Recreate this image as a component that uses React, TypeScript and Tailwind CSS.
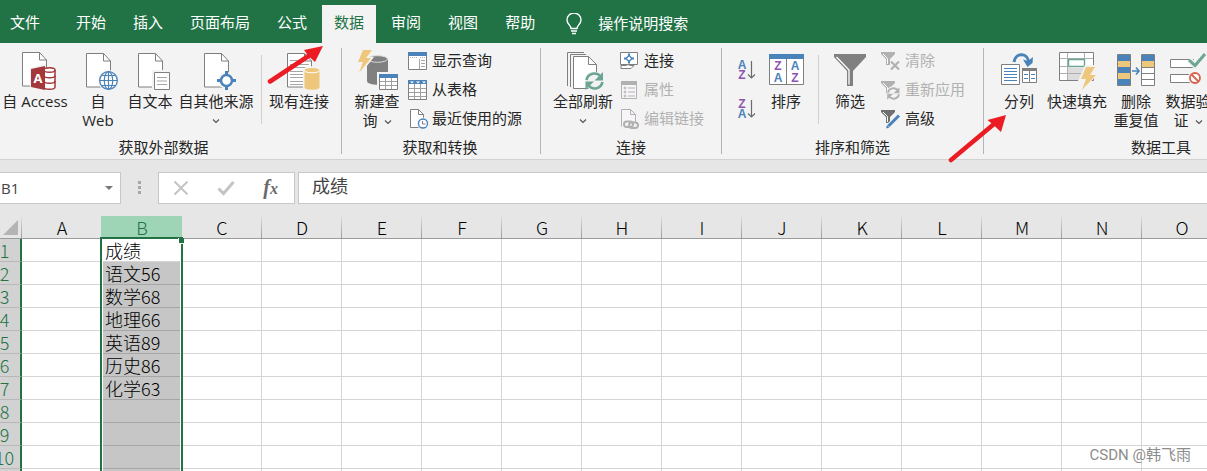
import type { ReactNode } from 'react';

const GREY = '#7f7f7f';
const BLUE = '#4a82ba';
const YELLOW = '#eec77c';
const TEAL = '#6ba593';
const PURPLE = '#8d55b0';
const MUTED = '#b1b1b1';
const PAPER = '#f3f3f3';

/* ---------- Icons ---------- */

const Big = ({ children }: { children: ReactNode }) => (
  <svg className="h-[42px] w-10 shrink-0 overflow-visible" viewBox="0 0 40 42" fill="none" aria-hidden="true">
    {children}
  </svg>
);

const Small = ({ children }: { children: ReactNode }) => (
  <svg className="h-5 w-5 shrink-0 overflow-visible" viewBox="0 0 20 20" fill="none" aria-hidden="true">
    {children}
  </svg>
);

const Page = () => (
  <>
    <path d="M8.5 3.5h17l7 7.5v26h-24z" fill="#fff" stroke={GREY} />
    <path d="M25.5 3.5V11h7" stroke={GREY} />
  </>
);

const AccessIcon = () => (
  <Big>
    <path d="M7.5 2.5h17l7 7.5v26h-24z" fill="#fff" stroke={GREY} />
    <path d="M24.5 2.5V10h7" stroke={GREY} />
    <path d="M15 18l16-4v28l-16-4z" fill={PAPER} />
    <path d="M29 20c0-3 11-3 11 0v17c0 3-11 3-11 0z" fill="#fff" stroke="#a4373a" strokeWidth="1.5" />
    <path d="M29 20c0 3 11 3 11 0M29 25.5c0 3 11 3 11 0M29 31c0 3 11 3 11 0" stroke="#a4373a" strokeWidth="1.5" />
    <path d="M16 19l14-3v24l-14-3z" fill="#a4373a" />
    <text x="23" y="32.500" textAnchor="middle" fontSize="13" fontWeight="700" fontFamily="Open Sans" fill="#fff">A</text>
  </Big>
);

const WebIcon = () => (
  <Big>
    <Page />
    <circle cx="30.500" cy="30.500" r="10.500" fill={PAPER} />
    <circle cx="30.500" cy="30.500" r="8.800" fill="#fff" stroke={BLUE} strokeWidth="1.300" />
    <ellipse cx="30.500" cy="30.500" rx="4.200" ry="8.800" stroke={BLUE} strokeWidth="1.200" />
    <path d="M30.500 22v17.500M21.500 30.500h18M23 25.500h15M23 35.500h15" stroke={BLUE} strokeWidth="1.200" />
  </Big>
);

const TextIcon = () => (
  <Big>
    <Page />
    <path d="M22 20h19v21H22z" fill={PAPER} />
    <path d="M24.500 22.500h15v17h-15z" fill="#fff" stroke={GREY} />
    <path d="M27 27.500h10M27 31h10M27 34.500h10" stroke="#a6a6a6" />
  </Big>
);

const SourcesIcon = () => (
  <Big>
    <Page />
    <circle cx="30.500" cy="30.500" r="8.500" fill={PAPER} />
    <path d="M30.500 21v5M30.500 35v5M21 30.500h5M35 30.500h5" stroke={BLUE} strokeWidth="3" />
    <circle cx="30.500" cy="30.500" r="5.500" fill="#fff" stroke={BLUE} strokeWidth="2.500" />
  </Big>
);

const ExistingIcon = () => (
  <Big>
    <Page />
    <path d="M11 10.500h12M11 14.500h19M11 17.500h19M11 21.500h19M11 24.500h13M11 27.500h13M11 31.500h13M11 34.500h13" stroke="#a6a6a6" />
    <path d="M24 20c0-5 18-5 18 0v18c0 4-18 4-18 0z" fill={PAPER} />
    <path d="M25.500 20.500c0-3.500 15-3.500 15 0v17c0 3-15 3-15 0z" fill={YELLOW} />
    <path d="M25.500 20.500c0 3 15 3 15 0" stroke="#fff" />
  </Big>
);

const NewQueryIcon = () => (
  <Big>
    <path d="M10 9v22c0 5 21 5 21 0V9z" fill="#808080" />
    <ellipse cx="20.500" cy="9" rx="10" ry="3.300" fill="#808080" stroke="#d9d9d9" />
    <path d="M5-1h11l-5 8h6L2 26l2-12h-5z" fill={PAPER} />
    <path d="M6 0h9l-6 8h5L2 23l4-11H1z" fill={YELLOW} />
    <path d="M20 22h22v20H20z" fill={PAPER} />
    <path d="M22.500 24.500h18v15h-18z" fill="#fff" stroke={GREY} />
    <path d="M22 24h19v4H22z" fill={BLUE} />
    <path d="M23 31.500h17M23 35.500h17M28.500 28v11M34.500 28v11" stroke="#a0a0a0" />
  </Big>
);

const RefreshArrows = ({ color }: { color: string }) => (
  <>
    <path d="M2 9a8 8 0 0 1 14-3.500" stroke={color} strokeWidth="2.600" />
    <path d="M18.500 1v8.500H10z" fill={color} />
    <path d="M18 11a8 8 0 0 1-14 3.500" stroke={color} strokeWidth="2.600" />
    <path d="M1 19v-8.500h8.500z" fill={color} />
  </>
);

const RefreshAllIcon = () => (
  <Big>
    <path d="M4.500 36V2.500H21M7.500 37V4.500H23" stroke={GREY} />
    <path d="M10.500 6.500h15l8 8v24h-23z" fill="#fff" stroke={GREY} />
    <path d="M25.500 6.500v8h8" stroke={GREY} />
    <circle cx="31" cy="31" r="9.500" fill={PAPER} />
    <g transform="translate(21.500 21)">
      <RefreshArrows color={TEAL} />
    </g>
  </Big>
);

const ShowQueriesIcon = () => (
  <Small>
    <path d="M.5 1.500h18v17H.5z" fill="#fff" stroke={GREY} />
    <path d="M0 1h19v4H0z" fill={BLUE} />
    <path d="M11.500 8v10" stroke="#a6a6a6" />
    <path d="M2 6.500h8M12 6.500h6" stroke="#b5b5b5" strokeDasharray="1 1" />
    <path d="M13 9.500h4M13 12.500h4M13 15.500h4" stroke="#a6a6a6" />
  </Small>
);

const FromTableIcon = () => (
  <Small>
    <path d="M.5.5h18v19H.5z" fill="#fff" stroke={GREY} />
    <path d="M0 0h19v4H0z" fill={BLUE} />
    <path d="M2 1.500h4l-2 2zM8 1.500h4l-2 2zM14 1.500h4l-2 2z" fill="#fff" />
    <path d="M1 8.500h17M1 12.500h17M1 16.500h17M6.500 4v15M12.500 4v15" stroke="#a0a0a0" />
  </Small>
);

const RecentIcon = () => (
  <Small>
    <path d="M2.500.5h8l5 5v13h-13z" fill="#fff" stroke={GREY} />
    <path d="M10.500.5v5h5" stroke={GREY} />
    <circle cx="15" cy="14.500" r="6" fill={PAPER} />
    <circle cx="15" cy="14.500" r="4.500" fill="#fff" stroke={BLUE} strokeWidth="1.300" />
    <path d="M14.500 12v3h3" stroke={GREY} />
  </Small>
);

const ConnectionsIcon = () => (
  <Small>
    <path d="M.5 1.500h17v12H.5z" fill="#fff" stroke={GREY} />
    <path d="M1 14.500h5l2-1 2 1h4l-3 3H1z" fill="#fff" stroke={GREY} />
    <path d="M9 2.500v3M9 9.500v3M4 7.500h3M11 7.500h3" stroke={BLUE} strokeWidth="2" />
    <path d="M9 4.500l3 3-3 3-3-3z" fill="#fff" stroke={BLUE} strokeWidth="1.300" />
  </Small>
);

const PropertiesIcon = () => (
  <Small>
    <path d="M1.500 1.500h15v17h-15z" fill="#f8f5f9" stroke={MUTED} />
    <path d="M1 1h16v4H1z" fill={MUTED} />
    <path d="M8 8h7M8 12h7M8 16h7" stroke={MUTED} />
    <circle cx="5" cy="8" r="1" stroke={MUTED} />
    <circle cx="5" cy="12" r="1" stroke={MUTED} />
    <circle cx="5" cy="16" r="1" stroke={MUTED} />
  </Small>
);

const EditLinksIcon = () => (
  <Small>
    <path d="M1.500 17.500V.5h9l5 5v8" fill="#f8f5f9" stroke={MUTED} />
    <path d="M10.500.5v5h5" stroke={MUTED} />
    <rect x="4" y="12.500" width="9" height="5.500" rx="2.700" stroke={MUTED} strokeWidth="2" />
    <rect x="9" y="13.500" width="9" height="5.500" rx="2.700" stroke={MUTED} strokeWidth="2" />
  </Small>
);

const SortGlyph = ({ top, bottom, topColor, bottomColor }: { top: string; bottom: string; topColor: string; bottomColor: string }) => (
  <svg className="h-6 w-5 overflow-visible" viewBox="0 0 20 24" fill="none" aria-hidden="true">
    <g fontSize="12" fontWeight="700" fontFamily="Liberation Sans" textAnchor="middle">
      <text x="6" y="11" fill={topColor}>{top}</text>
      <text x="6" y="21" fill={bottomColor}>{bottom}</text>
    </g>
    <path d="M15.500 3v17M12 16.500l3.500 3.500 3.500-3.500" stroke="#6b6b6b" strokeWidth="1.200" />
  </svg>
);

const SortIcon = () => (
  <Big>
    <path d="M3.500 4.500h34v30h-34z" fill="#fff" stroke={GREY} />
    <path d="M3 4h35v5H3z" fill={BLUE} />
    <path d="M20.500 9v25" stroke={GREY} />
    <g fontSize="12" fontWeight="700" fontFamily="Liberation Sans" textAnchor="middle">
      <text x="12" y="20" fill={PURPLE}>Z</text>
      <text x="12" y="31.500" fill={BLUE}>A</text>
      <text x="29" y="20" fill={BLUE}>A</text>
      <text x="29" y="31.500" fill={PURPLE}>Z</text>
    </g>
  </Big>
);

const FilterIcon = () => (
  <Big>
    <path d="M4 4h32v3L23 21v15h-6V21L4 7z" fill="#808080" />
    <path d="M6.500 7L19 20v14.500" stroke="#fff" strokeWidth="1.300" />
  </Big>
);

const SmallFunnel = ({ color }: { color: string }) => (
  <>
    <path d="M0 1h14v2L9 8v6H5V8L0 3z" fill={color} />
    <path d="M2 3l4.500 4.500V13" stroke="#fff" />
  </>
);

const ClearIcon = () => (
  <Small>
    <SmallFunnel color={MUTED} />
    <path d="M10 10.500l8 8M18 10.500l-8 8" stroke={MUTED} strokeWidth="2.200" />
  </Small>
);

const ReapplyIcon = () => (
  <Small>
    <SmallFunnel color={MUTED} />
    <circle cx="12.500" cy="13" r="7" fill={PAPER} />
    <g transform="translate(5.500 6.500) scale(.7)">
      <RefreshArrows color={MUTED} />
    </g>
  </Small>
);

const AdvancedIcon = () => (
  <Small>
    <SmallFunnel color="#6f6f6f" />
    <path d="M6 18.500L18 6.500" stroke={PAPER} strokeWidth="5" />
    <path d="M7.500 17L18 6.500" stroke={BLUE} strokeWidth="3" />
    <path d="M5 19.500l1-3.500 2.500 2.500z" fill={BLUE} />
  </Small>
);

const SplitColumnsIcon = () => (
  <Big>
    <path d="M2.500 14.500h18v20h-18z" fill="#fff" stroke={GREY} />
    <path d="M5 18.500h13M5 21.500h13M5 24.500h13M5 27.500h13M5 30.500h13" stroke={BLUE} />
    <path d="M23.500 18.500h14v14h-14z" fill="#fff" stroke={GREY} />
    <path d="M23 18h15v3H23zM30 21h1v12h-1z" fill={GREY} />
    <path d="M25 24.500h4M32 24.500h4M25 28.500h4M32 28.500h4" stroke={BLUE} />
    <path d="M15 12c1-9 13-10 14.500-1" stroke={BLUE} strokeWidth="3" />
    <path d="M24 9.500l5 1.500 5-4-.5 6-5 4z" fill={BLUE} />
  </Big>
);

const FlashFillIcon = () => (
  <Big>
    <path d="M2.500 2.500h34v28h-34z" fill="#fff" stroke={GREY} />
    <path d="M11 18h17v12H11z" fill="#dcdcdc" />
    <path d="M3 8.500h33M3 16.500h33M3 23.500h33M10.500 3v27M27.500 3v27" stroke="#b0b0b0" />
    <path d="M11.500 9.500h16v7h-16z" fill="#fff" stroke={TEAL} strokeWidth="1.400" />
    <path d="M28 15h13l-4 8h5L24 42l1-9h-5z" fill={PAPER} />
    <path d="M29 17h9l-5 8h6L25 40l4-11h-5z" fill={YELLOW} />
  </Big>
);

const RemoveDuplicatesIcon = () => (
  <Big>
    <path d="M1.500 4.500h13v31h-13z" fill={BLUE} stroke={GREY} />
    <path d="M2 11h12v6H2zM2 23h12v6H2z" fill={YELLOW} />
    <path d="M25.500 4.500h13v31h-13z" fill="#fff" stroke={GREY} />
    <path d="M26 5h12v6H26z" fill={BLUE} />
    <path d="M26 11h12v6H26z" fill={YELLOW} />
    <path d="M26 17.500h12M26 23.500h12M26 29.500h12" stroke={GREY} />
    <path d="M16 21h6M20 17.500l3 3.500-3 3.500" stroke={BLUE} strokeWidth="1.600" />
  </Big>
);

const ValidationIcon = () => (
  <Big>
    <path d="M2.500 9.500h23v8h-23zM2.500 24.500h23v8h-23z" fill="#fff" stroke={GREY} />
    <path d="M21 10l6 5.500L37 4" stroke={PAPER} strokeWidth="6" />
    <path d="M21 10l6 5.500L37 4" stroke={TEAL} strokeWidth="3" />
    <circle cx="27" cy="28" r="7" fill={PAPER} />
    <circle cx="27" cy="28" r="5" fill="#fff" stroke="#d8604c" strokeWidth="1.800" />
    <path d="M23.500 24.500l7 7" stroke="#d8604c" strokeWidth="1.800" />
  </Big>
);

const BulbIcon = () => (
  <svg className="h-[22px] w-4" viewBox="0 0 16 22" fill="none" stroke="#fff" strokeWidth="1.400" aria-hidden="true">
    <path d="M5 15.500c0-3-4-4.500-4-8.500a7 7 0 0 1 14 0c0 4-4 5.500-4 8.500zM5 18h6M6 20.500h4" />
  </svg>
);

const Chevron = () => (
  <svg className="inline-block h-2 w-2" viewBox="0 0 8 8" fill="none" stroke="#555" strokeWidth="1.200" aria-hidden="true">
    <path d="M1 2.500l3 3 3-3" />
  </svg>
);

/* ---------- Ribbon parts ---------- */

interface BigButtonProps {
  icon: ReactNode;
  lines: string[];
  menu?: boolean;
  width: string;
}

const BigButton = ({ icon, lines, menu, width }: BigButtonProps) => (
  <button type="button" className={`flex shrink-0 flex-col items-center pt-1 leading-[19px] whitespace-nowrap ${width}`}>
    {icon}
    {lines.map((line, i) => (
      <span key={line}>
        {line}
        {menu && lines.length > 1 && i === lines.length - 1 && <span className="ml-1.5"><Chevron /></span>}
      </span>
    ))}
    {menu && lines.length === 1 && <span className="flex h-[19px] items-center"><Chevron /></span>}
  </button>
);

const SmallButton = ({ icon, label, disabled }: { icon: ReactNode; label: string; disabled?: boolean }) => (
  <button
    type="button"
    disabled={disabled}
    className="flex h-[29px] items-center gap-1 whitespace-nowrap disabled:text-[#b1b1b1]"
  >
    {icon}
    {label}
  </button>
);

const Group = ({ title, className, titleClass = '', children }: { title: string; className: string; titleClass?: string; children: ReactNode }) => (
  <section className="flex shrink-0 flex-col pt-[3px]">
    <div className={`flex h-[91px] items-start ${className}`}>{children}</div>
    <h2 className={`text-center leading-5 ${titleClass}`}>{title}</h2>
  </section>
);

const GroupLine = () => <div className="mt-[5px] h-[106px] w-px shrink-0 bg-[#b5b5b5]" />;
const InnerLine = ({ className }: { className: string }) => (
  <div className={`mt-[9px] h-[69px] w-px shrink-0 bg-[#d0d0d0] ${className}`} />
);

const tabs = ['开始', '插入', '页面布局', '公式', '数据', '审阅', '视图', '帮助'];

const TabBar = () => (
  <nav className="flex h-[43px] shrink-0 items-end gap-[3px] overflow-hidden bg-[#217346] whitespace-nowrap text-white">
    <button type="button" className="mr-[9px] h-[38px] pr-3 pb-1 pl-2.5">文件</button>
    {tabs.map((tab) => (
      <button
        key={tab}
        type="button"
        className={`h-[38px] px-3 pb-1 ${tab === '数据' ? 'bg-[#f3f3f3] text-[#217346]' : ''}`}
      >
        {tab}
      </button>
    ))}
    <button type="button" className="ml-3 flex h-[38px] items-center gap-4 px-1 pb-px">
      <BulbIcon />
      操作说明搜索
    </button>
  </nav>
);

const Ribbon = () => (
  <div className="flex h-[117px] shrink-0 overflow-hidden border-b border-[#d2d2d2] bg-[#f3f3f3]">
    <Group title="获取外部数据" className="pr-[5px]" titleClass="pr-3.5">
      <BigButton icon={<AccessIcon />} lines={['自 Access']} width="w-[70px]" />
      <BigButton icon={<WebIcon />} lines={['自', 'Web']} width="w-14" />
      <BigButton icon={<TextIcon />} lines={['自文本']} width="w-12" />
      <BigButton icon={<SourcesIcon />} lines={['自其他来源']} menu width="w-[84px]" />
      <InnerLine className="ml-[3px]" />
      <BigButton icon={<ExistingIcon />} lines={['现有连接']} width="w-[74px]" />
    </Group>
    <GroupLine />
    <Group title="获取和转换" className="pr-[18px] pl-2" titleClass="pr-0.5">
      <BigButton icon={<NewQueryIcon />} lines={['新建查', '询']} menu width="w-[54px]" />
      <div className="ml-1">
        <SmallButton icon={<ShowQueriesIcon />} label="显示查询" />
        <SmallButton icon={<FromTableIcon />} label="从表格" />
        <SmallButton icon={<RecentIcon />} label="最近使用的源" />
      </div>
    </Group>
    <GroupLine />
    <Group title="连接" className="pr-[17px] pl-[7px]">
      <BigButton icon={<RefreshAllIcon />} lines={['全部刷新']} menu width="w-[70px]" />
      <div className="ml-[2px]">
        <SmallButton icon={<ConnectionsIcon />} label="连接" />
        <SmallButton icon={<PropertiesIcon />} label="属性" disabled />
        <SmallButton icon={<EditLinksIcon />} label="编辑链接" disabled />
      </div>
    </Group>
    <GroupLine />
    <Group title="排序和筛选" className="pr-[18px] pl-[14px]">
      <div className="flex w-6 shrink-0 flex-col pt-1">
        <button type="button" aria-label="升序" className="flex h-[39px] items-center">
          <SortGlyph top="A" bottom="Z" topColor={BLUE} bottomColor={PURPLE} />
        </button>
        <button type="button" aria-label="降序" className="flex h-[39px] items-center">
          <SortGlyph top="Z" bottom="A" topColor={PURPLE} bottomColor={BLUE} />
        </button>
      </div>
      <BigButton icon={<SortIcon />} lines={['排序']} width="w-[52px]" />
      <InnerLine className="ml-1.5" />
      <BigButton icon={<FilterIcon />} lines={['筛选']} width="w-[62px]" />
      <div>
        <SmallButton icon={<ClearIcon />} label="清除" disabled />
        <SmallButton icon={<ReapplyIcon />} label="重新应用" disabled />
        <SmallButton icon={<AdvancedIcon />} label="高级" />
      </div>
    </Group>
    <GroupLine />
    <Group title="数据工具" className="w-[356px] pl-[7px]" titleClass="pr-0.5">
      <BigButton icon={<SplitColumnsIcon />} lines={['分列']} width="w-14" />
      <BigButton icon={<FlashFillIcon />} lines={['快速填充']} width="w-[60px]" />
      <BigButton icon={<RemoveDuplicatesIcon />} lines={['删除', '重复值']} width="w-[58px]" />
      <BigButton icon={<ValidationIcon />} lines={['数据验', '证']} menu width="w-[46px]" />
    </Group>
  </div>
);

const FormulaBar = () => (
  <div className="flex h-14 shrink-0 items-start bg-[#e6e6e6] pt-3">
    <div className="flex h-8 w-[121px] shrink-0 items-center border border-l-0 border-[#c6c6c6] bg-white pr-[7px]">
      <input aria-label="名称框" defaultValue="B1" className="min-w-0 flex-1 pl-px text-[#444] outline-none" />
      <svg className="h-2 w-2" viewBox="0 0 8 8" fill="#777" aria-hidden="true"><path d="M0 2h8L4 6z" /></svg>
    </div>
    <svg className="mx-[17px] h-8 w-[3px]" viewBox="0 0 3 32" fill="#a6a6a6" aria-hidden="true">
      <path d="M0 9h3v3H0zM0 14h3v3H0zM0 19h3v3H0z" />
    </svg>
    <div className="flex h-8 w-[137px] shrink-0 items-center justify-between border border-[#c6c6c6] bg-white pr-4 pl-3.5">
      <button type="button" aria-label="取消">
        <svg className="h-4 w-4" viewBox="0 0 16 16" stroke="#c4c4c4" strokeWidth="2" aria-hidden="true"><path d="M1.500 1.500l13 13M14.500 1.500l-13 13" /></svg>
      </button>
      <button type="button" aria-label="输入">
        <svg className="h-4 w-[18px]" viewBox="0 0 18 16" fill="none" stroke="#c4c4c4" strokeWidth="3" aria-hidden="true"><path d="M1.500 8.500l5 5L16.500 2" /></svg>
      </button>
      <button type="button" aria-label="插入函数" className="font-['Liberation_Serif',serif] text-xl leading-6 font-bold text-[#6a6a6a] italic">
        f<span className="text-base">x</span>
      </button>
    </div>
    <input
      aria-label="编辑栏"
      defaultValue="成绩"
      className="ml-[3px] h-8 min-w-0 flex-1 border border-r-0 border-[#c6c6c6] bg-white pb-1.5 pl-[13px] text-lg text-[#444] outline-none"
    />
  </div>
);

/* ---------- Sheet ---------- */

const columns = ['A', 'B', 'C', 'D', 'E', 'F', 'G', 'H', 'I', 'J', 'K', 'L', 'M', 'N', 'O'];
const values = ['成绩', '语文56', '数学68', '地理66', '英语89', '历史86', '化学63', '', '', '', ''];

const headerFill = (column: string) => {
  if (column === 'B') return 'bg-[#9fd5b7] text-[#217346]';
  // the line before the selected column takes its colour
  if (column === 'A') return 'bg-[linear-gradient(#9fd5b7,#9fd5b7)] bg-[length:1px_100%] bg-right bg-no-repeat';
  return 'bg-[linear-gradient(#e0e0e0,#9b9b9b)] bg-[length:1px_100%] bg-right bg-no-repeat';
};

const Sheet = () => (
  <div className="relative flex-1 overflow-hidden bg-white font-['Noto_Sans_CJK_SC',sans-serif] text-lg font-light text-black">
    <table className="-ml-[11px] w-[1233px] table-fixed border-separate border-spacing-0 leading-[22px]">
      <colgroup>
        <col className="w-[33px]" />
        {columns.map((c) => <col key={c} className="w-20" />)}
      </colgroup>
      <thead>
        <tr className="h-[23px] bg-[#e6e6e6]">
          <th aria-label="全选" className="border-b border-[#9b9b9b] bg-[linear-gradient(#e0e0e0,#9b9b9b)] bg-[length:1px_100%] bg-right bg-no-repeat p-0">
            <svg className="ml-[14px] h-[15px] w-[15px]" viewBox="0 0 15 15" fill="#b4b4b4" aria-hidden="true"><path d="M15 0v15H0z" /></svg>
          </th>
          {columns.map((c) => (
            <th key={c} scope="col" className={`border-b border-[#9b9b9b] p-0 font-light ${headerFill(c)}`}>
              <div className="h-[22px]">{c}</div>
            </th>
          ))}
        </tr>
      </thead>
      <tbody>
        {values.map((value, row) => (
          <tr key={row} className="h-[23px]">
            <th scope="row" className="border-r-2 border-b border-r-[#217346] border-b-[#b8b8b8] bg-[#d2d2d2] p-0 font-light text-[#217346]">
              <div className="h-[22px]">{row < 10 ? row + 1 : ''}</div>
            </th>
            {columns.map((c) => (
              <td
                key={c}
                className={`border-r border-b p-0 ${
                  c === 'B' && row > 0 ? 'border-[#a6a6a6] bg-[#c6c6c6]' : 'border-[#d4d4d4]'
                }`}
              >
                {c === 'B' && <div className="h-[22px] pl-[3px] whitespace-nowrap">{value}</div>}
              </td>
            ))}
          </tr>
        ))}
      </tbody>
    </table>
    {/* Selection frame with its fill handle */}
    <div className="pointer-events-none absolute top-[21px] left-[100px] h-full w-[83px] border-2 border-b-0 border-[#217346]">
      <div className="h-full border-x border-t-0 border-white" />
      <div className="absolute -top-px -right-[3px] h-[6px] w-[6px] border-b border-l border-white bg-[#217346]" />
    </div>
  </div>
);

export default function App() {
  return (
    <div className="relative flex h-screen flex-col overflow-hidden bg-white font-['Open_Sans','Noto_Sans_CJK_SC',sans-serif] text-[15px] text-[#262626]">
      <TabBar />
      <Ribbon />
      <FormulaBar />
      <Sheet />

      {/* Arrows pointing at the tab and at the split command */}
      <svg className="pointer-events-none absolute top-[44px] left-[264px] h-10 w-[60px]" viewBox="0 0 60 40" aria-hidden="true">
        <path d="M6 37.500L46 11" stroke="#ec1c24" strokeWidth="4.500" strokeLinecap="round" />
        <path d="M59 2L40 6l4 5.500 7 6.500z" fill="#ec1c24" />
      </svg>
      <svg className="pointer-events-none absolute top-[113px] left-[946px] h-[50px] w-[60px]" viewBox="0 0 60 50" aria-hidden="true">
        <path d="M5 47L48 11" stroke="#ec1c24" strokeWidth="4.500" strokeLinecap="round" />
        <path d="M60 2L41.500 7l6 5 7.500 7z" fill="#ec1c24" />
      </svg>

      <p className="absolute right-4 bottom-1 leading-6 text-[#8c8c8c] font-['Roboto','Noto_Sans_CJK_SC',sans-serif]">
        CSDN @韩飞雨
      </p>
    </div>
  );
}
